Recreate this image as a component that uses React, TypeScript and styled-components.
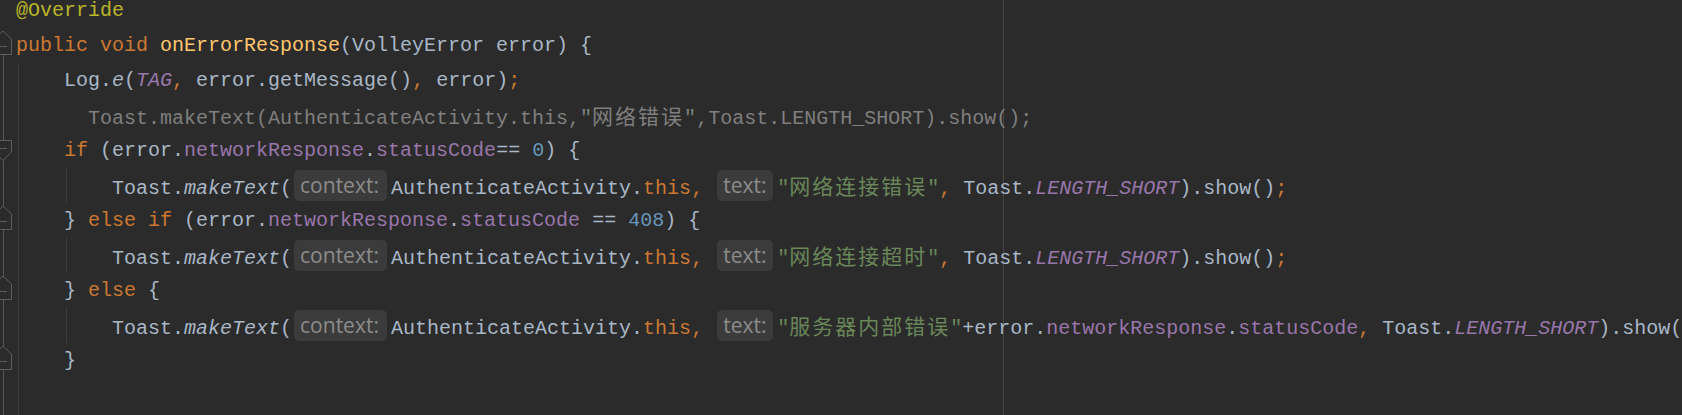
import React from "react";
import styled, { createGlobalStyle, css } from "styled-components";

const GlobalStyle = createGlobalStyle`
  html, body {
    margin: 0;
    padding: 0;
    background: #2b2b2b;
    overflow: hidden;
  }
`;

const Editor = styled.div`
  position: relative;
  width: 1682px;
  height: 415px;
  overflow: hidden;
  background: #2b2b2b;
`;

const RightMargin = styled.div`
  position: absolute;
  left: 1003px;
  top: 0;
  bottom: 0;
  width: 1px;
  background: #454545;
`;

const Lines = styled.div`
  position: relative;
  margin-top: -7px;
`;

const Row = styled.div`
  display: flex;
  height: 35px;
`;

type LineKind = "none" | "full" | "below";

const Gutter = styled.div<{ $line: LineKind }>`
  flex: none;
  width: 16px;
  height: 35px;
  background-image: linear-gradient(#565656, #565656);
  background-repeat: no-repeat;
  background-position: 3px bottom;
  background-size: ${(p) =>
    p.$line === "none" ? "0 0" : p.$line === "below" ? "1px 12px" : "1px 100%"};
`;

const Code = styled.div`
  position: relative;
  flex: 1;
  min-width: 0;
  padding-left: 0;
  white-space: pre;
  font-family: "Liberation Mono", "DejaVu Sans Mono", monospace;
  font-size: 20px;
  line-height: 35px;
  color: #a9b7c6;
`;

const Guide = styled.span<{ $col: number }>`
  position: absolute;
  top: 0;
  bottom: 0;
  left: ${(p) => 2 + p.$col * 12}px;
  width: 1px;
  background: #3e3e3e;
`;

type TokKind =
  | "plain"
  | "kw"
  | "ann"
  | "fn"
  | "str"
  | "num"
  | "field"
  | "sfield"
  | "smethod"
  | "gray";

const colors: Record<TokKind, string> = {
  plain: "#a9b7c6",
  kw: "#cc7832",
  ann: "#bbb529",
  fn: "#ffc66d",
  str: "#6a8759",
  num: "#6897bb",
  field: "#9876aa",
  sfield: "#9876aa",
  smethod: "#a9b7c6",
  gray: "#7f7f7f",
};

const T = styled.span<{ $k: TokKind }>`
  position: relative;
  color: ${(p) => colors[p.$k]};
  ${(p) =>
    (p.$k === "sfield" || p.$k === "smethod") &&
    css`
      font-style: italic;
    `}
`;

const Cjk = styled.span`
  font-family: "Noto Sans CJK SC", "Noto Sans CJK JP", sans-serif;
  font-size: 21px;
  letter-spacing: 2px;
`;

const Hint = styled.span<{ $w: number }>`
  position: relative;
  display: inline-block;
  vertical-align: top;
  box-sizing: border-box;
  width: ${(p) => p.$w}px;
  height: 31px;
  margin: 2px 4px 0 2px;
  padding-left: 6px;
  border-radius: 5px;
  background: #3b3b3b;
  color: #8c8c8c;
  font-family: "Open Sans", "Noto Sans", sans-serif;
  font-size: 21px;
  font-style: normal;
  line-height: 30px;
`;

const FoldMarker: React.FC<{ dir: "up" | "down" }> = ({ dir }) => (
  <svg width="12" height="35" viewBox="0 0 12 35" style={{ display: "block" }}>
    {dir === "up" ? (
      <>
        <polygon
          points="-5.5,11 3,3 11.5,11 11.5,26.5 -5.5,26.5"
          fill="#2b2b2b"
          stroke="#5e5e5e"
          strokeWidth="1"
        />
        <line x1="0" y1="18.5" x2="7" y2="18.5" stroke="#5e5e5e" strokeWidth="1" />
      </>
    ) : (
      <>
        <polygon
          points="-5.5,7.5 11.5,7.5 11.5,19 3,27.5 -5.5,19"
          fill="#2b2b2b"
          stroke="#5e5e5e"
          strokeWidth="1"
        />
        <line x1="0" y1="15.5" x2="7" y2="15.5" stroke="#5e5e5e" strokeWidth="1" />
      </>
    )}
  </svg>
);

type Part =
  | { k: TokKind; t: string }
  | { hint: string; w: number }
  | { cjk: string; k: TokKind };

const p = (k: TokKind, t: string): Part => ({ k, t });
const hint = (h: string, w: number): Part => ({ hint: h, w });
const str = (s: string, k: TokKind = "str"): Part[] => [
  p(k, '"'),
  { cjk: s, k },
  p(k, '"'),
];

interface LineDef {
  parts: Part[];
  line: LineKind;
  fold?: "up" | "down";
  guides: number[];
}

const toastCall = (s: string): Part[] => [
  p("plain", "        Toast."),
  p("smethod", "makeText"),
  p("plain", "("),
  hint("context:", 93),
  p("plain", "AuthenticateActivity."),
  p("kw", "this"),
  p("kw", ", "),
  hint("text:", 56),
  ...str(s),
];

const lines: LineDef[] = [
  { parts: [p("ann", "@Override")], line: "none", guides: [] },
  {
    parts: [
      p("kw", "public void "),
      p("fn", "onErrorResponse"),
      p("plain", "(VolleyError error) {"),
    ],
    line: "below",
    fold: "up",
    guides: [],
  },
  {
    parts: [
      p("plain", "    Log."),
      p("smethod", "e"),
      p("plain", "("),
      p("sfield", "TAG"),
      p("kw", ", "),
      p("plain", "error.getMessage()"),
      p("kw", ", "),
      p("plain", "error)"),
      p("kw", ";"),
    ],
    line: "full",
    guides: [0],
  },
  {
    parts: [
      p("gray", "      Toast.makeText(AuthenticateActivity.this,"),
      ...str("网络错误", "gray"),
      p("gray", ",Toast.LENGTH_SHORT).show();"),
    ],
    line: "full",
    guides: [0],
  },
  {
    parts: [
      p("plain", "    "),
      p("kw", "if"),
      p("plain", " (error."),
      p("field", "networkResponse"),
      p("plain", "."),
      p("field", "statusCode"),
      p("plain", "== "),
      p("num", "0"),
      p("plain", ") {"),
    ],
    line: "full",
    fold: "down",
    guides: [0],
  },
  {
    parts: [
      ...toastCall("网络连接错误"),
      p("kw", ", "),
      p("plain", "Toast."),
      p("sfield", "LENGTH_SHORT"),
      p("plain", ").show()"),
      p("kw", ";"),
    ],
    line: "full",
    guides: [0, 4],
  },
  {
    parts: [
      p("plain", "    } "),
      p("kw", "else if"),
      p("plain", " (error."),
      p("field", "networkResponse"),
      p("plain", "."),
      p("field", "statusCode"),
      p("plain", " == "),
      p("num", "408"),
      p("plain", ") {"),
    ],
    line: "full",
    fold: "up",
    guides: [0],
  },
  {
    parts: [
      ...toastCall("网络连接超时"),
      p("kw", ", "),
      p("plain", "Toast."),
      p("sfield", "LENGTH_SHORT"),
      p("plain", ").show()"),
      p("kw", ";"),
    ],
    line: "full",
    guides: [0, 4],
  },
  {
    parts: [p("plain", "    } "), p("kw", "else"), p("plain", " {")],
    line: "full",
    fold: "up",
    guides: [0],
  },
  {
    parts: [
      ...toastCall("服务器内部错误"),
      p("plain", "+error."),
      p("field", "networkResponse"),
      p("plain", "."),
      p("field", "statusCode"),
      p("kw", ", "),
      p("plain", "Toast."),
      p("sfield", "LENGTH_SHORT"),
      p("plain", ").show();"),
    ],
    line: "full",
    guides: [0, 4],
  },
  { parts: [p("plain", "    }")], line: "full", fold: "up", guides: [0] },
  { parts: [], line: "full", guides: [0] },
  { parts: [], line: "full", guides: [0] },
];

const renderPart = (part: Part, i: number) => {
  if ("hint" in part) {
    return (
      <Hint key={i} $w={part.w}>
        {part.hint}
      </Hint>
    );
  }
  if ("cjk" in part) {
    return (
      <T key={i} $k={part.k}>
        <Cjk>{part.cjk}</Cjk>
      </T>
    );
  }
  return (
    <T key={i} $k={part.k}>
      {part.t}
    </T>
  );
};

export default function App() {
  return (
    <>
      <GlobalStyle />
      <Editor>
        <RightMargin />
        <Lines>
          {lines.map((l, idx) => (
            <Row key={idx}>
              <Gutter $line={l.line}>{l.fold && <FoldMarker dir={l.fold} />}</Gutter>
              <Code>
                {l.guides.map((g) => (
                  <Guide key={g} $col={g} />
                ))}
                {l.parts.map(renderPart)}
              </Code>
            </Row>
          ))}
        </Lines>
      </Editor>
    </>
  );
}
